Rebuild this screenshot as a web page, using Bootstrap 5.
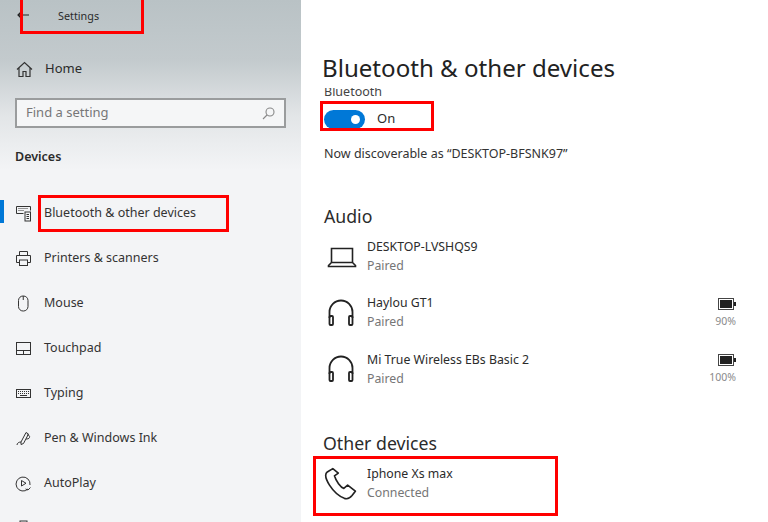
<!DOCTYPE html>
<html lang="en">
  <head>
    <meta charset="UTF-8" />
    <title>Settings</title>
    <link href="https://cdn.jsdelivr.net/npm/bootstrap@5.3.1/dist/css/bootstrap.min.css" rel="stylesheet" />
    <style>
      body {
        font-family: "Noto Sans", "Open Sans", sans-serif;
        color: #2b2b2b;
        background: #fff;
      }
      .shot {
        position: relative;
        width: 768px;
        height: 522px;
        overflow: hidden;
      }
      .side {
        width: 301px;
        height: 522px;
        overflow: hidden;
        background: linear-gradient(to bottom, #b9c2c5 0, #c3cacd 60px, #e2e5e7 115px, #f3f4f6 170px);
      }
      .side-head {
        height: 33px;
        padding-left: 17px;
        font-size: 10.8px;
      }
      .side-head svg {
        margin-top: -4px;
      }
      .side-head span {
        margin-left: 29px;
      }
      .home-row {
        height: 36px;
        margin-top: 18px;
        padding-left: 16px;
        font-size: 13px;
      }
      .find-box {
        height: 30px;
        margin: 11px 15px 0 15px;
        padding: 0 9px;
        background: #f5f6f7;
        border: 2px solid #9a9c9d;
        font-size: 13px;
        color: #777;
      }
      .side-title {
        margin: 20px 0 0 15px;
        font-size: 12.5px;
        font-weight: 600;
        line-height: 18px;
      }
      .side-nav {
        margin-top: 24.5px;
      }
      .nav-row {
        position: relative;
        height: 45px;
        padding-left: 15px;
        font-size: 12.5px;
        color: #333;
      }
      .nav-row svg,
      .home-row svg {
        width: 17px;
        height: 17px;
        margin-right: 12px;
        flex: none;
      }
      .active-bar {
        position: absolute;
        left: 0;
        top: 9px;
        width: 4px;
        height: 23px;
        background: #0078d7;
      }
      .main-pane {
        padding-left: 21px;
      }
      .page-title {
        margin: 50px 0 0 0;
        font-size: 24.1px;
        font-weight: 400;
        line-height: 36px;
        color: #222;
      }
      .clip-label {
        height: 9px;
        margin: 2px 0 0 2px;
        overflow: hidden;
        font-size: 12.5px;
        color: #444;
      }
      .clip-label span {
        display: block;
        margin-top: -5px;
        line-height: 18px;
      }
      .toggle-row {
        margin: 12px 0 0 2px;
        height: 20px;
        font-size: 13px;
      }
      .toggle-pill {
        position: relative;
        width: 41px;
        height: 19px;
        margin-right: 12px;
        border-radius: 10px;
        background: #0078d7;
      }
      .toggle-pill::after {
        content: "";
        position: absolute;
        right: 5px;
        top: 5px;
        width: 9px;
        height: 9px;
        border-radius: 50%;
        background: #fff;
      }
      .found-line {
        margin: 16px 0 0 2px;
        font-size: 12.5px;
        line-height: 18px;
        color: #333;
      }
      .audio-title {
        margin: 41px 0 0 2px;
        font-size: 17.7px;
        line-height: 24px;
      }
      .other-title {
        margin: 33.5px 0 0 1px;
        font-size: 17.7px;
        line-height: 24px;
      }
      .dev-row {
        height: 56.5px;
        padding-left: 5px;
        font-size: 12.3px;
        line-height: 18px;
      }
      .dev-row svg.dev-icon {
        width: 30px;
        height: 30px;
        margin-right: 10px;
        flex: none;
      }
      .dev-row svg.phone-icon {
        width: 33px;
        height: 33px;
        margin-left: -3px;
      }
      .dev-state {
        margin-top: 1px;
        color: #767676;
      }
      .batt-col {
        width: 60px;
        margin-right: 32px;
        font-size: 10.5px;
        line-height: 14px;
        color: #8a8a8a;
        text-align: right;
      }
      .batt-col svg {
        display: block;
        width: 18px;
        height: 12px;
        margin: 0 0 4px auto;
      }
      .red-mark {
        position: absolute;
        border: 3px solid #f00;
        pointer-events: none;
      }
    </style>
  </head>

  <body>
    <div class="shot d-flex">
      <!-- Left column -->
      <div class="side flex-shrink-0">
        <div class="side-head d-flex align-items-center">
          <svg width="12" height="10" viewBox="0 0 12 10" fill="none" stroke="#222" stroke-width="1.2"><path d="M12 5H1M5 1 1 5l4 4" /></svg>
          <span>Settings</span>
        </div>
        <div class="home-row d-flex align-items-center">
          <svg viewBox="0 0 17 17" fill="none" stroke="#333" stroke-width="1.2"><path d="M1 8.500 8.500 1.500 16 8.500M3 7v8.500h4v-5h3v5h4V7" /></svg>
          Home
        </div>
        <div class="find-box d-flex align-items-center justify-content-between">
          <span>Find a setting</span>
          <svg width="13" height="13" viewBox="0 0 13 13" fill="none" stroke="#888" stroke-width="1.1"><circle cx="8" cy="5" r="4" /><path d="M5 8 1 12" /></svg>
        </div>
        <div class="side-title">Devices</div>
        <div class="side-nav">
          <div class="nav-row d-flex align-items-center">
            <i class="active-bar"></i>
            <svg viewBox="0 0 17 17" fill="none" stroke="#333"><path d="M1.500 1.500h14v4M1.500 1.500v7h7" /><path d="M3.500 3.500h10M3.500 5.500h5" stroke-dasharray="1 1" /><rect x="10" y="7" width="5.500" height="9" /><path d="M11.500 9.500h2.500M11.500 11.500h2.500M11.500 13.500h2.500" /></svg>
            Bluetooth &amp; other devices
          </div>
          <div class="nav-row d-flex align-items-center">
            <svg viewBox="0 0 17 17" fill="none" stroke="#333"><path d="M4.500 5V1.500h8V5M4.500 12.500h-3V5.500h14v7h-3" /><rect x="4.500" y="10" width="8" height="5.500" /></svg>
            Printers &amp; scanners
          </div>
          <div class="nav-row d-flex align-items-center">
            <svg viewBox="0 0 17 17" fill="none" stroke="#333"><rect x="3.500" y="1" width="9.500" height="15" rx="4.500" /><path d="M8.250 1v4" /></svg>
            Mouse
          </div>
          <div class="nav-row d-flex align-items-center">
            <svg viewBox="0 0 17 17" fill="none" stroke="#333"><rect x="1.500" y="2.500" width="14" height="12" /><path d="M1.500 10.500h14M8.500 10.500v4" /></svg>
            Touchpad
          </div>
          <div class="nav-row d-flex align-items-center">
            <svg viewBox="0 0 17 17" fill="none" stroke="#333"><rect x="1.500" y="4.500" width="14" height="8" /><path d="M3 6.500h11M3 8.500h11" stroke-dasharray="1 1" /><path d="M5 10.500h7" /></svg>
            Typing
          </div>
          <div class="nav-row d-flex align-items-center">
            <svg viewBox="0 0 17 17" fill="none" stroke="#333"><path d="M6 12 11 2.500l2.500 1.500-5 9.500-2.500 1zM12 5c2 0 3 1 2.500 2.500S12 9 11 9M6 12c-2 0-4 1-4 3" /></svg>
            Pen &amp; Windows Ink
          </div>
          <div class="nav-row d-flex align-items-center">
            <svg viewBox="0 0 17 17" fill="none" stroke="#333"><path d="M13 14A7 7 0 1 1 15 10M15.500 12.500 13 15l-2.500-1" /><path d="M6.500 5.500v5.500l4.500-2.750z" /></svg>
            AutoPlay
          </div>
          <div class="nav-row d-flex align-items-center">
            <svg viewBox="0 0 17 17" fill="none" stroke="#333"><rect x="5" y="1" width="7" height="15" /></svg>
          </div>
        </div>
      </div>

      <!-- Right column -->
      <div class="main-pane flex-grow-1">
        <h1 class="page-title">Bluetooth &amp; other devices</h1>
        <div class="clip-label"><span>Bluetooth</span></div>
        <div class="toggle-row d-flex align-items-center">
          <div class="toggle-pill"></div>
          On
        </div>
        <div class="found-line">Now discoverable as “DESKTOP-BFSNK97”</div>

        <div class="audio-title">Audio</div>
        <div class="dev-row d-flex align-items-center">
          <svg class="dev-icon" viewBox="0 0 30 30" fill="none" stroke="#222" stroke-width="1.6"><path d="M4.500 7.500h21v14h-21zM4.500 21.500l-3 3v1h27v-1l-3-3" /></svg>
          <div><div>DESKTOP-LVSHQS9</div><div class="dev-state">Paired</div></div>
        </div>
        <div class="dev-row d-flex align-items-center">
          <svg class="dev-icon" viewBox="0 0 30 30" fill="none" stroke="#222" stroke-width="1.8"><path d="M2.500 20v-6a11.500 11.500 0 0 1 23 0v6" /><rect x="2.500" y="18" width="3.500" height="9" rx="1" /><rect x="22" y="18" width="3.500" height="9" rx="1" /></svg>
          <div><div>Haylou GT1</div><div class="dev-state">Paired</div></div>
          <div class="batt-col ms-auto">
            <svg viewBox="0 0 18 12"><rect x="0.500" y="0.500" width="15" height="11" fill="#fff" stroke="#444" /><rect x="2" y="2" width="12" height="8" fill="#222" /><rect x="16" y="4" width="2" height="4" fill="#222" /></svg>
            90%
          </div>
        </div>
        <div class="dev-row d-flex align-items-center">
          <svg class="dev-icon" viewBox="0 0 30 30" fill="none" stroke="#222" stroke-width="1.8"><path d="M2.500 20v-6a11.500 11.500 0 0 1 23 0v6" /><rect x="2.500" y="18" width="3.500" height="9" rx="1" /><rect x="22" y="18" width="3.500" height="9" rx="1" /></svg>
          <div><div>Mi True Wireless EBs Basic 2</div><div class="dev-state">Paired</div></div>
          <div class="batt-col ms-auto">
            <svg viewBox="0 0 18 12"><rect x="0.500" y="0.500" width="15" height="11" fill="#fff" stroke="#444" /><rect x="2" y="2" width="12" height="8" fill="#222" /><rect x="16" y="4" width="2" height="4" fill="#222" /></svg>
            100%
          </div>
        </div>

        <div class="other-title">Other devices</div>
        <div class="dev-row d-flex align-items-center">
          <svg class="dev-icon phone-icon" viewBox="0 0 30 30" fill="none" stroke="#222" stroke-width="1.5"><path d="M8 1.500 3 4.500C.5 6.500 1.500 11 5 16.500s8.500 10 13.500 12c3 1 5 0 7-2.500l3-4-7-5.500-3.500 3c-3-1-7-6.500-8.500-11.500l3.500-2.500z" stroke-linejoin="round" /></svg>
          <div><div>Iphone Xs max</div><div class="dev-state">Connected</div></div>
        </div>
      </div>

      <!-- Red annotation boxes drawn over the screenshot -->
      <div class="red-mark" style="left:20px;top:-3px;width:124px;height:37px"></div>
      <div class="red-mark" style="left:38px;top:195px;width:191px;height:37px"></div>
      <div class="red-mark" style="left:320px;top:101px;width:114px;height:30px"></div>
      <div class="red-mark" style="left:313px;top:456px;width:245px;height:60px"></div>
    </div>
    <script src="https://cdn.jsdelivr.net/npm/bootstrap@5.3.1/dist/js/bootstrap.bundle.min.js"></script>
  </body>
</html>
